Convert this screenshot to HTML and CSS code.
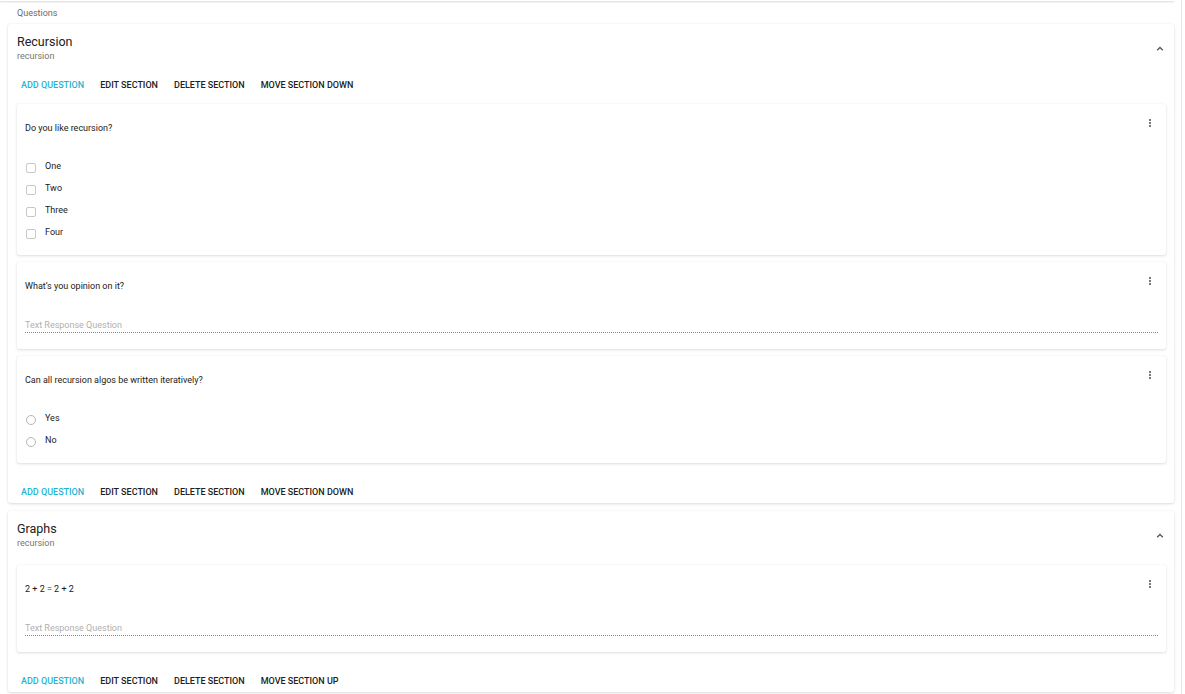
FILE: index.html
```html
<!DOCTYPE html>
<html>
<head>
<meta charset="utf-8">
<link rel="stylesheet" href="styles.css">
</head>
<body>
<div class="page">
  <div class="main">
    <div class="topcard"></div>
    <div class="label">Questions</div>

    <div class="section">
      <div class="sec-head">
        <div>
          <div class="sec-title">Recursion</div>
          <div class="sec-sub">recursion</div>
        </div>
        <svg class="chev" width="8" height="5" viewBox="0 0 8 5"><polyline points="1.2,4.3 4,1.5 6.8,4.3" fill="none" stroke="#555" stroke-width="1.3"/></svg>
      </div>
      <div class="actions">
        <span class="btn primary">Add question</span>
        <span class="btn">Edit section</span>
        <span class="btn">Delete section</span>
        <span class="btn">Move section down</span>
      </div>

      <div class="qcard">
        <div class="kebab"><i></i><i></i><i></i></div>
        <div class="qtext">Do you like recursion?</div>
        <div class="opts">
          <div class="opt"><span class="box"></span>One</div>
          <div class="opt"><span class="box"></span>Two</div>
          <div class="opt"><span class="box"></span>Three</div>
          <div class="opt"><span class="box"></span>Four</div>
        </div>
      </div>

      <div class="qcard">
        <div class="kebab"><i></i><i></i><i></i></div>
        <div class="qtext">What’s you opinion on it?</div>
        <div class="field">Text Response Question</div>
      </div>

      <div class="qcard">
        <div class="kebab"><i></i><i></i><i></i></div>
        <div class="qtext">Can all recursion algos be written iteratively?</div>
        <div class="opts">
          <div class="opt"><span class="radio"></span>Yes</div>
          <div class="opt"><span class="radio"></span>No</div>
        </div>
      </div>

      <div class="actions bottom">
        <span class="btn primary">Add question</span>
        <span class="btn">Edit section</span>
        <span class="btn">Delete section</span>
        <span class="btn">Move section down</span>
      </div>
    </div>

    <div class="section">
      <div class="sec-head">
        <div>
          <div class="sec-title">Graphs</div>
          <div class="sec-sub">recursion</div>
        </div>
        <svg class="chev" width="8" height="5" viewBox="0 0 8 5"><polyline points="1.2,4.3 4,1.5 6.8,4.3" fill="none" stroke="#555" stroke-width="1.3"/></svg>
      </div>
      <div class="qcard first">
        <div class="kebab"><i></i><i></i><i></i></div>
        <div class="qtext">2 + 2 = 2 + 2</div>
        <div class="field">Text Response Question</div>
      </div>
      <div class="actions bottom">
        <span class="btn primary">Add question</span>
        <span class="btn">Edit section</span>
        <span class="btn">Delete section</span>
        <span class="btn">Move section up</span>
      </div>
    </div>
  </div>
  <div class="rail"></div>
</div>
</body>
</html>
```

FILE: styles.css
```css
* { box-sizing: border-box; }
html, body { margin: 0; padding: 0; background: #fff; }
body {
  font-family: Roboto, "Noto Sans", Arial, sans-serif;
  color: #212121;
  height: 694px;
  overflow: hidden;
}
.page {
  display: flex;
  height: 694px;
}
.main {
  width: 1174px;
  padding-left: 8px;
}
.rail {
  margin-left: 7px;
  width: 4px;
  border-left: 1px solid #e6e6e6;
}
.topcard {
  margin-left: -8px;
  height: 2px;
  background: #fff;
  box-shadow: 0 1px 2px rgba(0,0,0,0.16);
  margin-top: -1px;
}
.label {
  font-size: 9px;
  line-height: 12px;
  color: #6b6b6b;
  padding: 6px 0 0 9px;
  height: 23px;
}
.section {
  background: #fff;
  box-shadow: 0 1px 3px rgba(0,0,0,0.14), 0 0 1px rgba(0,0,0,0.08);
  border-radius: 2px;
  padding: 0 8px 0 9px;
  margin-bottom: 8px;
}
.sec-head {
  display: flex;
  justify-content: space-between;
  align-items: flex-start;
  padding-top: 10px;
}
.sec-title {
  font-size: 12.5px;
  line-height: 16px;
  color: #212121;
}
.sec-sub {
  font-size: 9px;
  line-height: 12px;
  color: #757575;
}
.chev {
  margin-top: 12px;
  margin-right: 2px;
}
.actions {
  display: flex;
  align-items: center;
  height: 24px;
  margin: 11px 0 7px;
}
.actions.bottom {
  margin: 18px 0 0;
  height: 22px;
}
.btn {
  font-size: 9px;
  font-weight: 500;
  text-transform: uppercase;
  color: #212121;
  padding: 0 4px;
  margin-right: 8px;
}
.btn.primary { color: #1fb5d3; }
.qcard {
  position: relative;
  background: #fff;
  box-shadow: 0 1px 3px rgba(0,0,0,0.13), 0 0 1px rgba(0,0,0,0.1);
  border-radius: 2px;
  padding: 18px 8px 12px;
  margin-bottom: 7px;
}
.qcard.first { margin-top: 16px; }
.qtext {
  font-size: 9px;
  line-height: 12px;
  color: #1a1a1a;
}
.kebab {
  position: absolute;
  right: 15px;
  top: 15px;
  display: flex;
  flex-direction: column;
  gap: 1px;
}
.kebab i {
  display: block;
  width: 2px;
  height: 2px;
  background: #777;
}
.opts { margin-top: 21px; }
.opt {
  display: flex;
  align-items: center;
  height: 22px;
  font-size: 9px;
  color: #1a1a1a;
}
.box {
  width: 10px;
  height: 10px;
  border: 1px solid #c8c8c8;
  border-radius: 2px;
  margin: 3px 9px 0 1px;
}
.radio {
  width: 10px;
  height: 10px;
  border: 1px solid #b5b5b5;
  border-radius: 50%;
  margin: 3px 9px 0 1px;
}
.field {
  margin-top: 27px;
  font-size: 9px;
  line-height: 12px;
  color: #b0b0b0;
  padding-bottom: 1px;
  border-bottom: 1px dotted #8a8a8a;
  margin-bottom: 4px;
}
```
